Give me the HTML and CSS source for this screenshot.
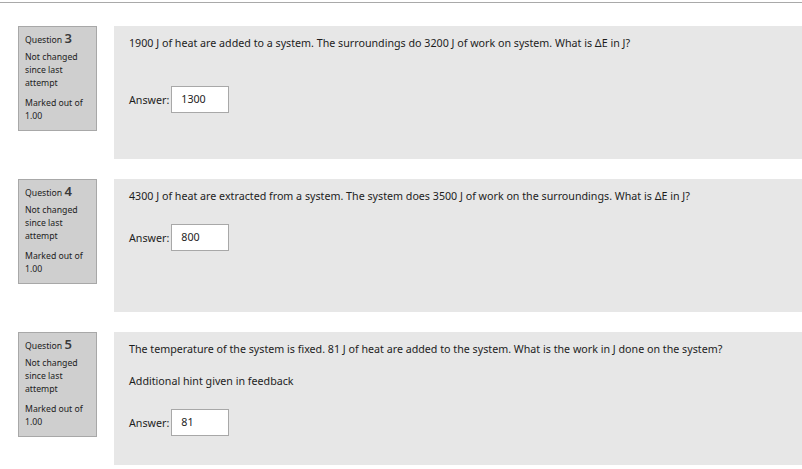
FILE: index.html
```html
<!DOCTYPE html>
<html>
<head>
    <meta charset="UTF-8">
    <title>Quiz review</title>
    <link rel="stylesheet" href="styles.css">
</head>
<body class="body">
    <div class="rule"></div>

    <div class="que">
        <div class="info">
            <div class="no">Question <span class="qno">3</span></div>
            <div class="state">Not changed since last attempt</div>
            <div class="grade">Marked out of 1.00</div>
        </div>
        <div class="content">
            <p class="qtext">1900 J of heat are added to a system. The surroundings do 3200 J of work on system. What is ΔE in J?</p>
            <div class="ablock low">
                <span class="label">Answer:</span>
                <span class="answer">1300</span>
            </div>
        </div>
    </div>

    <div class="que">
        <div class="info">
            <div class="no">Question <span class="qno">4</span></div>
            <div class="state">Not changed since last attempt</div>
            <div class="grade">Marked out of 1.00</div>
        </div>
        <div class="content">
            <p class="qtext">4300 J of heat are extracted from a system. The system does 3500 J of work on the surroundings. What is ΔE in J?</p>
            <div class="ablock">
                <span class="label">Answer:</span>
                <span class="answer">800</span>
            </div>
        </div>
    </div>

    <div class="que">
        <div class="info">
            <div class="no">Question <span class="qno">5</span></div>
            <div class="state">Not changed since last attempt</div>
            <div class="grade">Marked out of 1.00</div>
        </div>
        <div class="content">
            <p class="qtext">The temperature of the system is fixed. 81 J of heat are added to the system. What is the work in J done on the system?</p>
            <p class="qtext">Additional hint given in feedback</p>
            <div class="ablock">
                <span class="label">Answer:</span>
                <span class="answer">81</span>
            </div>
        </div>
    </div>
</body>
</html>
```

FILE: styles.css
```css
.body{
    margin:0px;
    background:#fff;
    color:#1d1d1d;
    font-family:"Segoe UI","Noto Sans","Open Sans",sans-serif;
}
.rule{
    margin-top:2px;
    border-top:1px solid #a9a9a9;
}

.que{
    display:flex;
    margin:23px 0 20px 18px;
}
.que + .que{
    margin-top:0;
}

.info{
    flex:none;
    align-self:flex-start;
    width:65px;
    padding:5px 6px 7px 6px;
    background-color:#cfcfcf;
    border:1px solid #a8a8a8;
    font-size:8.7px;
    line-height:13px;
    color:#222;
}
.no{
    margin-bottom:4px;
}
.qno{
    font-size:13px;
    font-weight:600;
    color:#3a3a3a;
}
.state{
    margin-bottom:7px;
}

.content{
    flex:auto;
    margin-left:17px;
    min-height:109px;
    padding:9px 15px 15px 15px;
    background-color:#e7e7e7;
    font-size:10.7px;
}
.qtext{
    margin:0 0 16px 0;
    line-height:16px;
}
.ablock{
    display:flex;
    align-items:center;
    margin-top:20px;
}
.ablock.low{
    margin-top:35px;
}
.label{
    margin-right:2px;
}
.answer{
    width:47px;
    height:25px;
    line-height:25px;
    padding-left:9px;
    background:#fff;
    border:1px solid #a8a8a8;
}
```
